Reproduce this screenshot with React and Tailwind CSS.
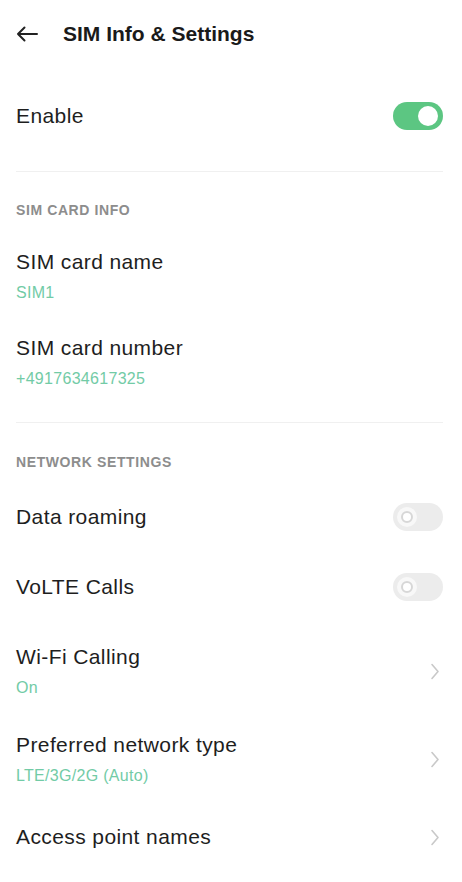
import React from 'react';

const FONT = { fontFamily: '"Liberation Sans", Arial, sans-serif' };

const Toggle = ({ on }) => {
    if (on) {
        return (
            <div className="w-[50px] h-[28px] rounded-full bg-[#5cc682] flex items-center justify-end pr-[5px] shrink-0">
                <div className="w-[20px] h-[20px] rounded-full bg-white" />
            </div>
        );
    }
    return (
        <div className="w-[50px] h-[28px] rounded-full bg-[#ececec] flex items-center pl-[4px] shrink-0">
            <div className="w-[20px] h-[20px] rounded-full bg-[#f8f8f8] flex items-center justify-center">
                <div className="w-[12px] h-[12px] rounded-full border-[2.5px] border-[#d7d7d7] bg-white" />
            </div>
        </div>
    );
};

const Chevron = () => (
    <svg width="10" height="17" viewBox="0 0 10 17" className="shrink-0 mr-[3px]">
        <path d="M2 1.5l6 7-6 7" fill="none" stroke="#c9c9c9" strokeWidth="1.6" strokeLinecap="round" strokeLinejoin="round" />
    </svg>
);

const SectionLabel = ({ children, className }) => (
    <div className={`text-[14px] leading-[20px] font-bold text-[#8d8d8d] tracking-[0.6px] ${className}`}>
        {children}
    </div>
);

const Row = ({ title, sub, right, className }) => (
    <div className={`flex items-center justify-between ${className}`}>
        <div className="flex flex-col">
            <span className="text-[21px] leading-[26px] text-[#1e1e1e] tracking-[0.4px]">{title}</span>
            {sub && <span className="mt-[8px] text-[16px] leading-[20px] text-[#72cba6] tracking-[0.3px]">{sub}</span>}
        </div>
        {right}
    </div>
);

export default function App() {
    return (
        <div className="w-[462px] h-[882px] bg-white overflow-hidden" style={FONT}>
            <div className="h-[68px] pl-4 flex items-center">
                <svg width="22" height="16" viewBox="0 0 22 16" className="shrink-0">
                    <path d="M21 8H2M8.5 1.5L2 8l6.5 6.5" fill="none" stroke="#222" strokeWidth="2" strokeLinecap="round" strokeLinejoin="round" />
                </svg>
                <span className="ml-[25px] text-[21px] font-bold text-[#1a1a1a]">SIM Info &amp; Settings</span>
            </div>

            <div className="pl-4 pr-[19px]">
                <Row title="Enable" className="h-[96px]" right={<Toggle on />} />
                <div className="mt-[7px] h-px bg-[#f0f0f0]" />

                <SectionLabel className="pt-[28px] pb-[13px]">SIM CARD INFO</SectionLabel>
                <Row title="SIM card name" sub="SIM1" className="pt-[16px] pb-[16px]" />
                <Row title="SIM card number" sub="+4917634617325" className="pt-[16px] pb-[16px]" />
                <div className="mt-[17px] h-px bg-[#f0f0f0]" />

                <SectionLabel className="pt-[29px] pb-[10px]">NETWORK SETTINGS</SectionLabel>
                <Row title="Data roaming" className="h-[70px]" right={<Toggle />} />
                <Row title="VoLTE Calls" className="h-[70px]" right={<Toggle />} />
                <Row title="Wi-Fi Calling" sub="On" className="pt-[22px] pb-[14px]" right={<Chevron />} />
                <Row title="Preferred network type" sub="LTE/3G/2G (Auto)" className="pt-[20px] pb-[15px]" right={<Chevron />} />
                <Row title="Access point names" className="h-[72px]" right={<Chevron />} />
            </div>
        </div>
    );
}
